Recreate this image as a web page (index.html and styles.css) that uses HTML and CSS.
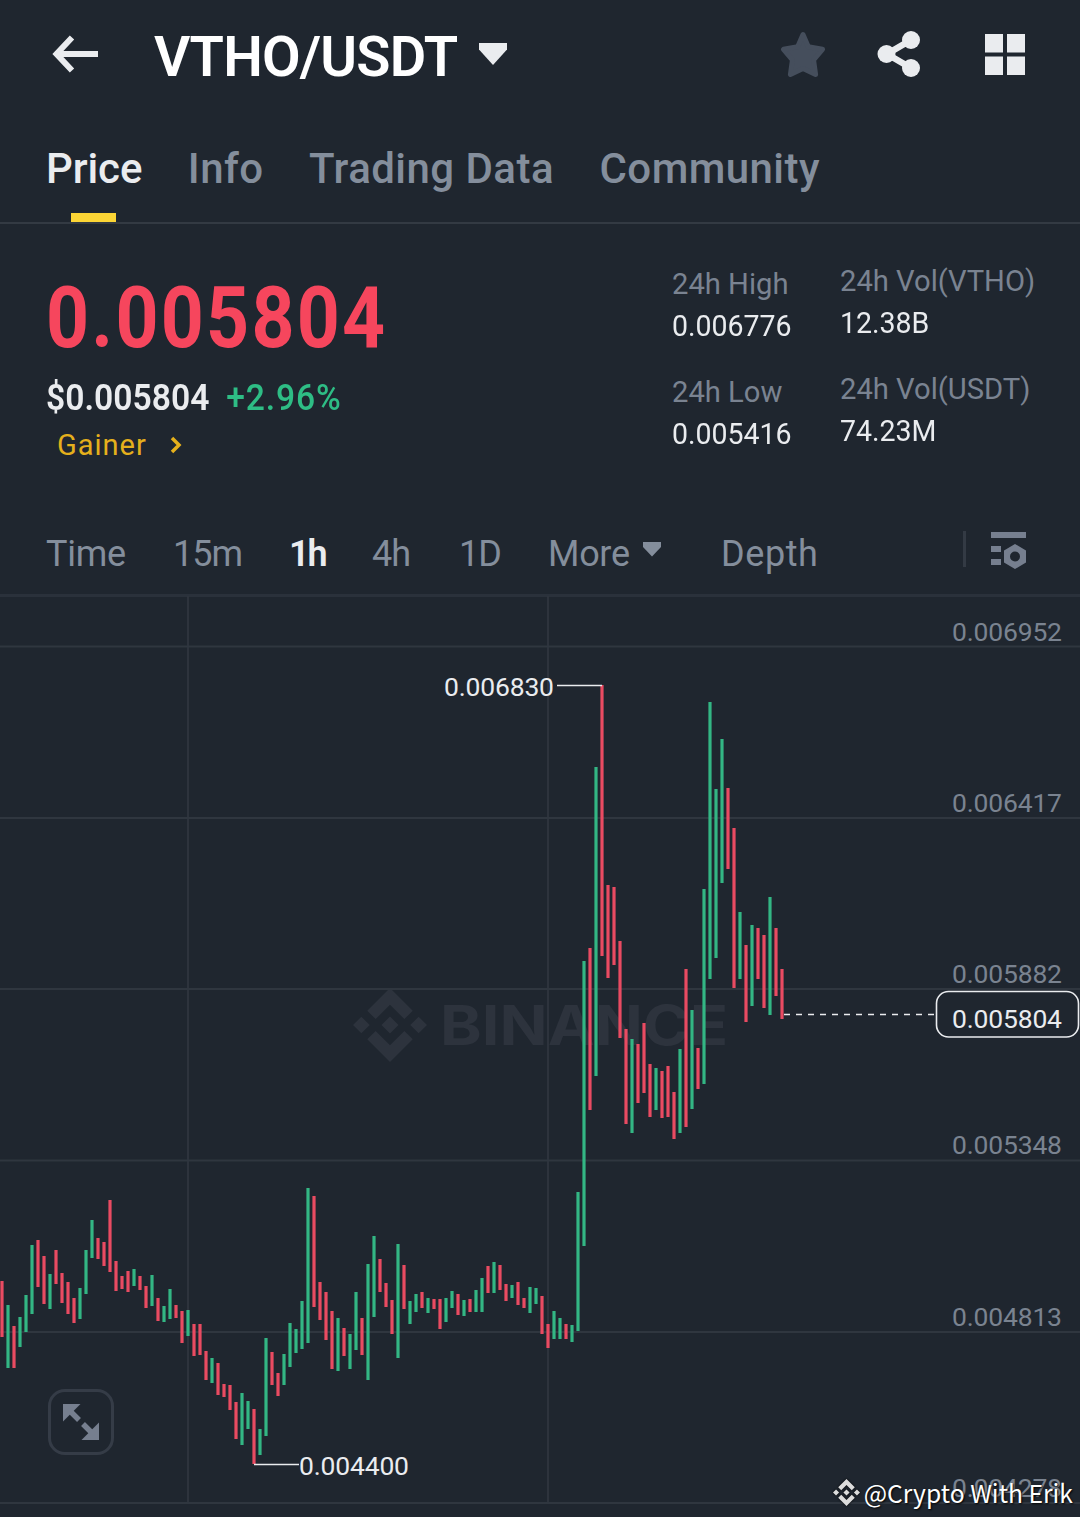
FILE: index.html
```html
<!DOCTYPE html>
<html lang="en">
<head>
  <meta charset="UTF-8">
  <meta name="viewport" content="width=device-width, initial-scale=1.0">
  <title>VTHO/USDT</title>
  <link rel="stylesheet" href="styles.css">
</head>
<body>
  <!-- Header -->
  <header class="header">
    <svg class="back" width="46" height="38" viewBox="0 0 46 38">
      <path d="M20 2.5 4.5 19 20 35.5M4 19H46" fill="none" stroke="currentColor" stroke-width="6"/>
    </svg>
    <h1 class="pair">VTHO/USDT</h1>
    <svg class="caret" width="28" height="22" viewBox="0 0 28 22">
      <path d="M0 0H28V6.5L14 22 0 6.5z" fill="currentColor"/>
    </svg>
    <div class="actions">
      <svg class="star" width="46" height="48" viewBox="0 0 46 48">
        <path d="M23 4.500 28.300 16.800 42.500 19.300 33.600 30 35.600 44.500 23 38.500 10.400 44.500 12.400 30 3.500 19.300 17.700 16.800z" fill="currentColor" stroke="currentColor" stroke-width="5" stroke-linejoin="round"/>
      </svg>
      <svg width="44" height="48" viewBox="0 0 44 48">
        <path d="M34 10 10 24 34 38" fill="none" stroke="currentColor" stroke-width="6.500"/>
        <circle cx="34" cy="10" r="9"/>
        <circle cx="9.500" cy="24" r="9"/>
        <circle cx="34" cy="38" r="9"/>
      </svg>
      <svg width="40" height="41" viewBox="0 0 40 41">
        <path d="M0 0h18v18.500H0zM22 0h18v18.500H22zM0 22.500h18v18.500H0zM22 22.500h18v18.500H22z"/>
      </svg>
    </div>
  </header>

  <!-- Tabs -->
  <nav class="tabs">
    <a class="active">Price</a>
    <a>Info</a>
    <a>Trading Data</a>
    <a>Community</a>
  </nav>

  <!-- Ticker -->
  <section class="ticker">
    <div class="quote">
      <div class="last">0.005804</div>
      <div class="fiat"><span>$0.005804</span><span class="change">+2.96%</span></div>
      <div class="tag">
        <span>Gainer</span>
        <svg width="12" height="18" viewBox="0 0 12 18"><path d="M2 2 9 9 2 16" fill="none" stroke="currentColor" stroke-width="3.500"/></svg>
      </div>
    </div>
    <dl class="stats">
      <div><dt>24h High</dt><dd>0.006776</dd></div>
      <div><dt>24h Low</dt><dd>0.005416</dd></div>
    </dl>
    <dl class="stats volume">
      <div><dt>24h Vol(VTHO)</dt><dd>12.38B</dd></div>
      <div><dt>24h Vol(USDT)</dt><dd>74.23M</dd></div>
    </dl>
  </section>

  <!-- Timeframes -->
  <div class="timeframes">
    <span>Time</span>
    <span class="num">15m</span>
    <span class="num active">1h</span>
    <span class="num">4h</span>
    <span class="num">1D</span>
    <span class="more">More
      <svg width="20" height="15" viewBox="0 0 20 15"><path d="M1 0H19V5L10 14.500 1 5z" fill="currentColor"/></svg>
    </span>
    <span class="depth">Depth</span>
    <div class="settings">
      <svg width="36" height="38" viewBox="0 0 36 38">
        <path d="M0 1H35V7H0zM0 15H10V21H0zM0 28H10V34H0z"/>
        <path fill-rule="evenodd" d="M24 13 35 19.500V31.500L24 38 13 31.500V19.500zM24 20.500a5 5 0 1 0 0 10 5 5 0 0 0 0-10z"/>
      </svg>
    </div>
  </div>

  <!-- Chart -->
  <main class="chart">
    <svg class="plot" width="1080" height="921" viewBox="0 596 1080 921">
      <defs>
        <symbol id="binance" viewBox="0 0 126.610 126.610">
          <path d="M38.730 53.200 63.300 28.620 87.890 53.220 102.190 38.920 63.300 0 24.430 38.900zM0 63.310 14.300 49 28.610 63.300 14.300 77.610zM38.730 73.410 63.300 98 87.890 73.400 102.200 87.690 63.300 126.600 24.430 87.720zM98 63.310 112.300 49 126.610 63.300 112.300 77.620zM77.830 63.300 63.300 48.780 48.790 63.280 63.300 77.780z"/>
        </symbol>
      </defs>
      <g class="watermark">
        <use href="#binance" x="353" y="988" width="74" height="74"/>
        <text x="440" y="1045" textLength="288" lengthAdjust="spacingAndGlyphs">BINANCE</text>
      </g>
      <path class="grid" d="M0 646.500H1080M0 818H1080M0 989H1080M0 1160.500H1080M0 1332H1080M0 1503H1080M188 596V1503M548 596V1503"/>
      <g class="axis">
        <text x="952" y="641" textLength="110">0.006952</text>
        <text x="952" y="812" textLength="110">0.006417</text>
        <text x="952" y="983" textLength="110">0.005882</text>
        <text x="952" y="1154" textLength="110">0.005348</text>
        <text x="952" y="1326" textLength="110">0.004813</text>
        <text x="952" y="1497" textLength="110">0.004278</text>
      </g>
      <g id="candles"></g>
      <path class="marker" d="M557 685.500H602M254 1464.500H299"/>
      <path class="marker" d="M784 1014.500H936" stroke-dasharray="6 6"/>
      <rect class="last-tag" x="936.500" y="991.500" width="142" height="45.500" rx="12"/>
      <g class="labels">
        <text x="444" y="696" textLength="110">0.006830</text>
        <text x="299" y="1475" textLength="110">0.004400</text>
        <text x="952" y="1028" textLength="110">0.005804</text>
      </g>
    </svg>
    <button class="expand" aria-label="Full screen">
      <svg width="36" height="36" viewBox="0 0 36 36">
        <path d="M0 0H17.500L0 17.500zM36 36H18.500L36 18.500z" fill="currentColor"/>
        <path d="M5 5 16 16M31 31 20 20" stroke="currentColor" stroke-width="5.500"/>
      </svg>
    </button>
    <div class="credit">
      <svg width="27" height="27"><use href="#binance"/></svg>
      <span>@Crypto With Erik</span>
    </div>
  </main>

  <script>
    // colour, high y, low y for every hour, 6px apart
    const bars = `r1281-1337 g1305-1368 r1326-1368 g1317-1347 g1295-1332 g1245-1314 r1240-1287 r1256-1304 g1274-1309 r1250-1284
      r1273-1303 r1282-1314 r1298-1323 g1288-1319 g1250-1294 g1220-1258 r1238-1259 r1242-1266 r1200-1272 r1261-1291
      r1276-1289 r1271-1292 g1269-1286 r1276-1290 r1286-1308 g1275-1306 r1298-1321 g1306-1322 g1289-1319 r1305-1318
      r1311-1343 g1310-1336 r1324-1356 r1324-1355 r1351-1380 g1358-1383 r1363-1395 r1384-1397 r1385-1410 r1402-1439
      g1393-1445 g1401-1429 r1409-1464 g1429-1455 g1338-1436 r1352-1385 r1373-1396 g1354-1385 g1323-1367 g1329-1353
      g1301-1349 g1188-1343 r1196-1307 r1282-1320 r1292-1340 r1311-1369 g1318-1371 r1328-1356 g1334-1369 g1292-1350
      r1318-1355 g1264-1380 g1236-1317 r1259-1292 r1283-1307 r1300-1334 g1244-1358 r1265-1309 g1301-1324 g1294-1312
      r1292-1308 g1298-1313 r1299-1309 r1299-1329 g1298-1322 g1291-1308 r1294-1315 g1300-1316 r1299-1312 g1290-1312
      g1278-1312 r1266-1293 g1262-1293 r1265-1290 r1284-1301 g1285-1298 r1282-1305 r1298-1308 g1287-1313 g1288-1304
      r1296-1334 r1324-1348 g1311-1339 g1318-1339 r1324-1339 g1325-1342 g1192-1331 g961-1246 r948-1110 g767-1076
      r685-956 r885-978 r887-965 r941-1038 r1029-1124 g1039-1133 r1044-1103 r1023-1093 r1064-1117 g1068-1110
      r1071-1118 r1066-1117 r1092-1139 g1049-1133 r969-1127 g1010-1109 r1048-1089 g889-1084 g702-979 g789-958
      g739-883 r788-869 r828-988 g912-979 r945-1022 g925-1006 r928-979 r935-1008 g897-1015 r928-996 r969-1019`.split(/\s+/);

    const candles = document.getElementById('candles');
    bars.forEach((bar, i) => {
      const [high, low] = bar.slice(1).split('-');
      const line = document.createElementNS('http://www.w3.org/2000/svg', 'path');
      line.setAttribute('class', bar[0] === 'g' ? 'up' : 'down');
      line.setAttribute('d', `M${2 + i * 6} ${high}V${low}`);
      candles.appendChild(line);
    });
  </script>
</body>
</html>
```
FILE: styles.css
```css
:root {
  --bg: #1f262f;
  --text: #eaecef;
  --muted: #848e9c;
  --line: #2f363f;
  --green: #2ebd85;
  --red: #f6465d;
  --yellow: #fcd535;
}
* {
  box-sizing: border-box;
  margin: 0;
  padding: 0;
}
body {
  width: 1080px;
  height: 1517px;
  overflow: hidden;
  background: var(--bg);
  color: var(--text);
  font-family: Roboto, "Liberation Sans", sans-serif;
}
svg {
  display: block;
  flex: none;
  fill: currentColor;
}
/* Header */
.header {
  display: flex;
  align-items: center;
  height: 108px;
  padding: 0 55px 0 52px;
}
.pair {
  margin: 5px 0 0 56px;
  font-size: 56px;
  line-height: 60px;
  font-weight: 600;
  letter-spacing: -0.8px;
  color: #fff;
}
.caret {
  margin-left: 22px;
}
.actions {
  display: flex;
  align-items: center;
  margin-left: auto;
}
.actions svg + svg {
  margin-left: 51px;
}
.actions svg:last-child {
  margin-left: 64px;
}
.actions .star {
  color: #454e5c;
}
/* Tabs */
.tabs {
  display: flex;
  gap: 45.5px;
  height: 116px;
  padding: 38px 46px 0;
  border-bottom: 2px solid #333a43;
  font-size: 42px;
  line-height: 46px;
  font-weight: 500;
  letter-spacing: 0.45px;
  color: var(--muted);
}
.tabs a {
  position: relative;
}
.tabs .active {
  color: var(--text);
  letter-spacing: -0.1px;
}
.tabs .active::after {
  content: "";
  position: absolute;
  left: 50%;
  bottom: 0;
  width: 45px;
  height: 9px;
  margin-left: -23px;
  background: var(--yellow);
}
/* Ticker */
.ticker {
  display: flex;
  height: 295px;
  padding: 39px 0 0 46px;
}
.quote {
  width: 626px;
  padding-top: 12px;
}
.last {
  font-size: 86px;
  line-height: 86px;
  font-weight: 700;
  letter-spacing: 2.6px;
  color: var(--red);
  transform: scaleX(.873);
  transform-origin: left;
}
.fiat {
  display: flex;
  gap: 18px;
  margin-top: 17px;
  font-size: 36px;
  line-height: 40px;
  font-weight: 600;
  transform: scaleX(.935);
  transform-origin: left;
}
.change {
  color: var(--green);
  font-weight: 500;
  letter-spacing: 0.9px;
}
.tag {
  display: flex;
  align-items: center;
  gap: 23px;
  margin: 9px 0 0 11px;
  font-size: 29px;
  line-height: 36px;
  letter-spacing: 1px;
  color: #e5b01c;
}
.stats {
  width: 168px;
  font-size: 30px;
  line-height: 42px;
}
.stats div {
  margin-bottom: 24px;
}
.stats dt {
  font-size: 29.2px;
  color: #7a8391;
  white-space: nowrap;
}
.stats dd {
  transform: scaleX(.95);
  transform-origin: left;
}
.volume {
  margin-top: -3px;
}
/* Timeframes */
.timeframes {
  display: grid;
  grid-template-columns: 127px 116px 83px 87px 89px 173px 242px 1fr;
  align-items: center;
  height: 78px;
  padding: 0 0 6px 46px;
  border-bottom: 3px solid #2a313b;
  font-size: 36px;
  line-height: 40px;
  letter-spacing: -0.3px;
  color: var(--muted);
}
.timeframes .num {
  letter-spacing: -1px;
}
.timeframes .active {
  color: var(--text);
  font-weight: 600;
  letter-spacing: -2px;
}
.timeframes .depth {
  letter-spacing: 0.6px;
}
.more {
  display: flex;
  align-items: center;
  gap: 12px;
}
.more svg {
  margin-bottom: 8px;
}
.settings {
  height: 36px;
  margin-bottom: 9px;
  padding-left: 25px;
  border-left: 3px solid #333a44;
  color: #767f8f;
}
/* Chart */
.chart {
  position: relative;
  height: 921px;
  margin-top: -1px;
}
.plot text {
  font-size: 26.5px;
}
.plot .watermark {
  fill: #2d333d;
}
.plot .watermark text {
  font: 700 55px Inter, sans-serif;
}
.grid {
  fill: none;
  stroke: var(--line);
  stroke-width: 1.8;
}
.axis {
  fill: #7a8390;
}
.labels {
  fill: var(--text);
}
.up, .down {
  stroke-width: 3.2;
}
.up {
  stroke: #33b684;
}
.down {
  stroke: #e94b62;
}
.marker {
  stroke: var(--text);
  stroke-width: 1.6;
}
.last-tag {
  fill: var(--bg);
  stroke: var(--text);
  stroke-width: 1.6;
}
.expand {
  position: absolute;
  left: 48px;
  top: 793px;
  width: 66px;
  height: 66px;
  padding-left: 12px;
  border: 3px solid #353c47;
  border-radius: 17px;
  background: none;
  color: #767f8f;
}
.credit {
  position: absolute;
  right: 7px;
  bottom: 7px;
  display: flex;
  align-items: center;
  gap: 4px;
  font: 24.7px/36px "Noto Sans CJK SC", "Noto Sans", sans-serif;
  color: #fff;
  text-shadow: 1px 1px 2px #000;
}
.credit svg {
  color: #dcdcdc;
  filter: drop-shadow(0 0 1px #000);
}
```
